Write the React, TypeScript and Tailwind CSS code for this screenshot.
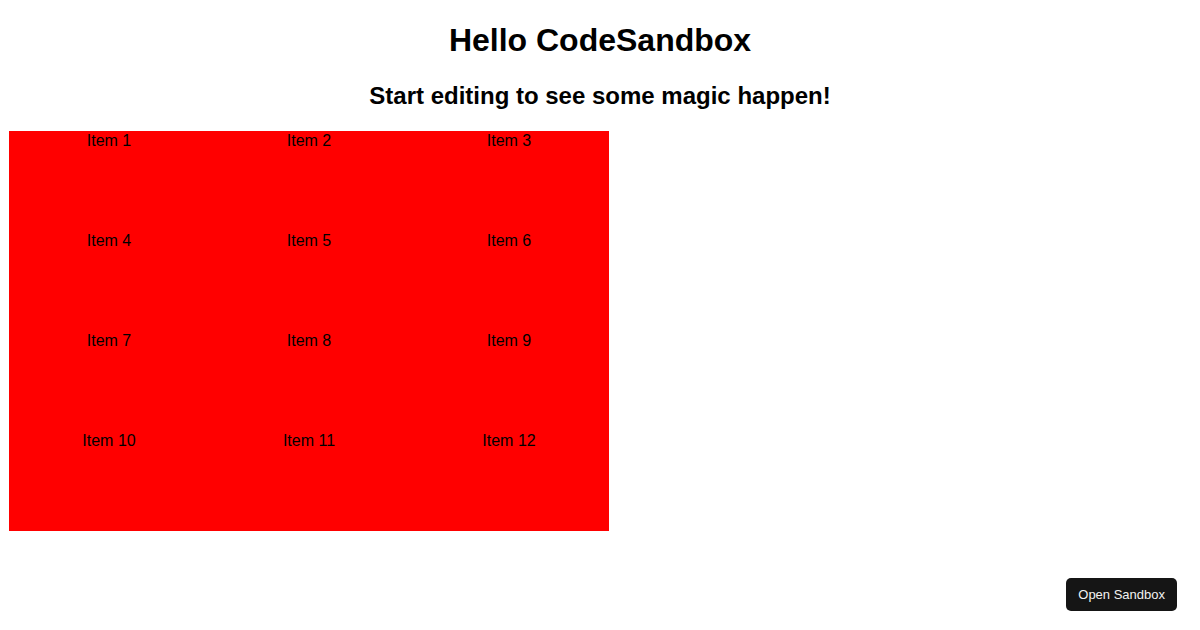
import React from "react";

export default function App() {
  const items = Array.from({ length: 12 }, (_, i) => `Item ${i + 1}`);
  return (
    <div className="relative min-h-[630px] w-full bg-white text-black font-['Liberation_Sans',Arial,Helvetica,sans-serif]">
      <div className="text-center">
        <h1 className="pt-[22px] text-[32px] leading-[37px] font-bold">Hello CodeSandbox</h1>
        <h2 className="mt-[23px] text-[24px] leading-[28px] font-bold">
          Start editing to see some magic happen!
        </h2>
      </div>
      <div className="ml-[9px] mt-[21px] grid w-[600px] grid-cols-3 bg-[#ff0000]">
        {items.map((t) => (
          <div key={t} className="h-[100px] text-center text-[16px] leading-[18px]">
            <span className="relative top-[1px]">{t}</span>
          </div>
        ))}
      </div>
      <button className="absolute bottom-[19px] right-[23px] flex h-[33px] items-center rounded-[5px] bg-[#151515] px-[12px] text-[13px] text-[#f2f2f2]">
        Open Sandbox
      </button>
    </div>
  );
}
